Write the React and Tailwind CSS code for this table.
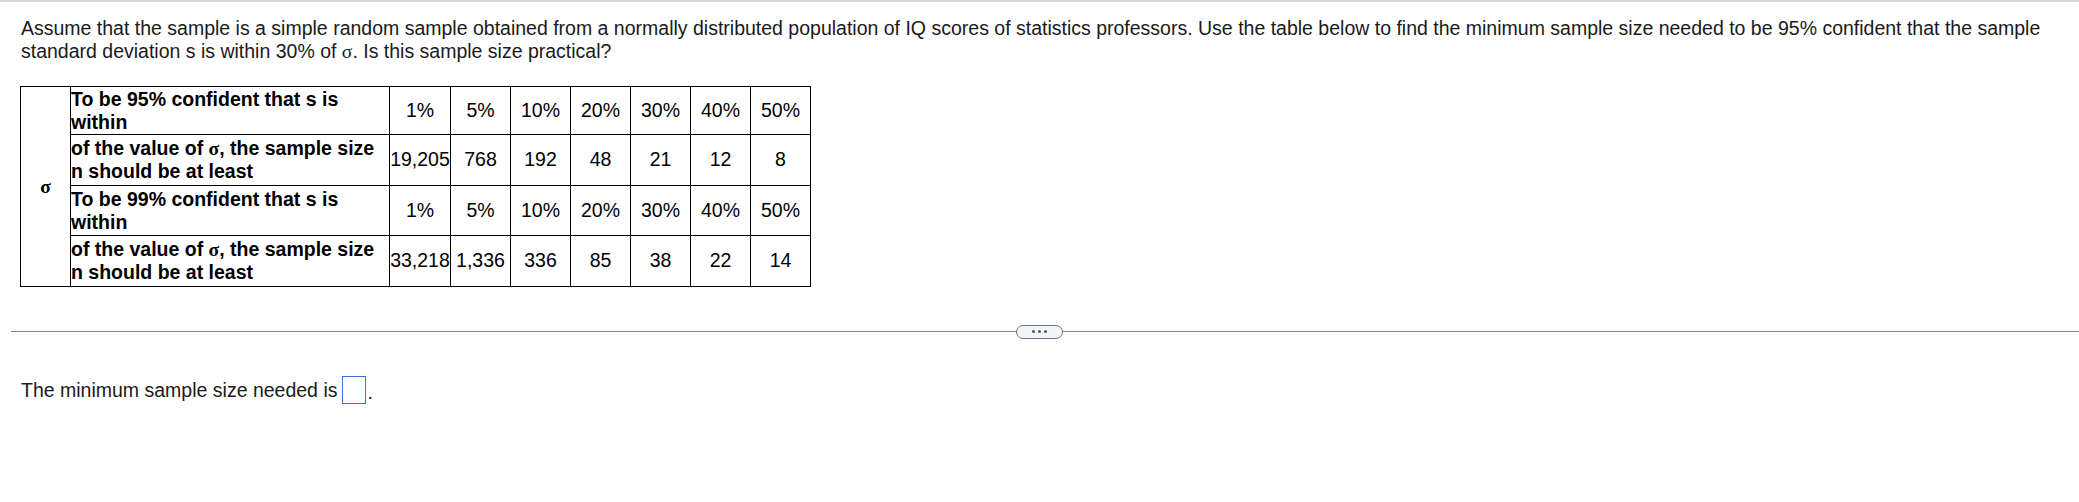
export default function App() {
  const pct = ["1%", "5%", "10%", "20%", "30%", "40%", "50%"];
  const n95 = ["19,205", "768", "192", "48", "21", "12", "8"];
  const n99 = ["33,218", "1,336", "336", "85", "38", "22", "14"];
  const widths = ["w-[61px]", "w-[60px]", "w-[60px]", "w-[60px]", "w-[60px]", "w-[60px]", "w-[60px]"];

  const label = "border border-black p-0 text-left align-middle font-bold leading-[23px] whitespace-nowrap";
  const cell = "border border-black p-0 text-center align-middle whitespace-nowrap";

  return (
    <div className="min-h-screen w-full bg-white text-[#1a1a1a] font-['Liberation_Sans',Arial,sans-serif] border-t-2 border-[#d3d7e0]">
      <p className="px-[21px] pt-[15px] text-[19.5px] leading-[23px] whitespace-nowrap">
        Assume that the sample is a simple random sample obtained from a normally distributed population of IQ scores of statistics
        professors. Use the table below to find the minimum sample size needed to be 95% confident that the sample
        <br />
        standard deviation s is within 30% of <span className="font-['Liberation_Serif',serif]">σ</span>. Is this sample size practical?
      </p>

      <table className="ml-[20px] mt-[23px] border-collapse text-[19.5px] text-black">
        <tbody>
          <tr className="h-[48px]">
            <td rowSpan={4} className="w-[50px] border border-black text-center align-middle font-bold font-['Liberation_Serif',serif]">
              σ
            </td>
            <td className={`${label} w-[319px]`}>
              To be 95% confident that s is
              <br />
              within
            </td>
            {pct.map((v, i) => (
              <td key={i} className={`${cell} ${widths[i]}`}>{v}</td>
            ))}
          </tr>
          <tr className="h-[51px]">
            <td className={label}>
              of the value of <span className="font-['Liberation_Serif',serif]">σ</span>, the sample size
              <br />
              n should be at least
            </td>
            {n95.map((v, i) => (
              <td key={i} className={cell}>{v}</td>
            ))}
          </tr>
          <tr className="h-[50px]">
            <td className={label}>
              To be 99% confident that s is
              <br />
              within
            </td>
            {pct.map((v, i) => (
              <td key={i} className={cell}>{v}</td>
            ))}
          </tr>
          <tr className="h-[51px]">
            <td className={label}>
              of the value of <span className="font-['Liberation_Serif',serif]">σ</span>, the sample size
              <br />
              n should be at least
            </td>
            {n99.map((v, i) => (
              <td key={i} className={cell}>{v}</td>
            ))}
          </tr>
        </tbody>
      </table>

      <div className="relative mt-[44px] ml-[11px] flex items-center">
        <div className="h-px flex-1 bg-[#7d8494]" />
        <button className="absolute left-[1005px] top-1/2 -translate-y-1/2 flex h-[14px] w-[47px] items-center justify-center gap-[3px] rounded-full border border-[#6b7280] bg-[#f3f4f6]">
          <span className="h-[3px] w-[3px] rounded-full bg-[#4b5563]" />
          <span className="h-[3px] w-[3px] rounded-full bg-[#4b5563]" />
          <span className="h-[3px] w-[3px] rounded-full bg-[#4b5563]" />
        </button>
      </div>

      <p className="mt-[44px] flex items-center px-[21px] text-[19.5px] leading-[23px]">
        The minimum sample size needed is
        <span className="ml-[5px] inline-block h-[28px] w-[24px] border border-[#3b6fd6]" />
        <span className="ml-[1px] self-end">.</span>
      </p>
    </div>
  );
}
